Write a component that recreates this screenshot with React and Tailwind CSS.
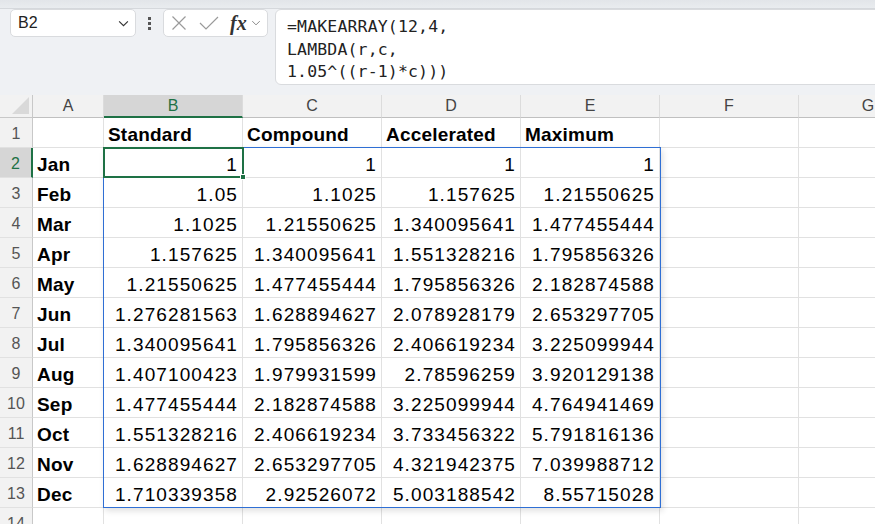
import React from "react";

const rows = [
  ["Jan", "1", "1", "1", "1"],
  ["Feb", "1.05", "1.1025", "1.157625", "1.21550625"],
  ["Mar", "1.1025", "1.21550625", "1.340095641", "1.477455444"],
  ["Apr", "1.157625", "1.340095641", "1.551328216", "1.795856326"],
  ["May", "1.21550625", "1.477455444", "1.795856326", "2.182874588"],
  ["Jun", "1.276281563", "1.628894627", "2.078928179", "2.653297705"],
  ["Jul", "1.340095641", "1.795856326", "2.406619234", "3.225099944"],
  ["Aug", "1.407100423", "1.979931599", "2.78596259", "3.920129138"],
  ["Sep", "1.477455444", "2.182874588", "3.225099944", "4.764941469"],
  ["Oct", "1.551328216", "2.406619234", "3.733456322", "5.791816136"],
  ["Nov", "1.628894627", "2.653297705", "4.321942375", "7.039988712"],
  ["Dec", "1.710339358", "2.92526072", "5.003188542", "8.55715028"],
];

const cols = [
  { l: "A", w: "w-[71px]" },
  { l: "B", w: "w-[139px]", sel: true },
  { l: "C", w: "w-[139px]" },
  { l: "D", w: "w-[139px]" },
  { l: "E", w: "w-[139px]" },
  { l: "F", w: "w-[139px]" },
  { l: "G", w: "w-[139px]" },
];

const font = { fontFamily: '"Liberation Sans", Arial, sans-serif' };

function Chevron({ className }) {
  return (
    <svg className={className} viewBox="0 0 12 8" fill="none" stroke="currentColor" strokeWidth="1.3">
      <path d="M1 1.5 L6 6.5 L11 1.5" />
    </svg>
  );
}

function Cell({ w, children, align = "right", bold = false }) {
  return (
    <div
      className={`${w} h-[30px] shrink-0 border-r border-b border-[#e1e1e1] flex items-center px-[4px] pt-[5px] overflow-hidden whitespace-nowrap text-[19px] text-black ${
        align === "right" ? "justify-end tracking-[1.1px]" : "justify-start tracking-[0.2px]"
      } ${bold ? "font-bold" : ""}`}
    >
      {children}
    </div>
  );
}

function RowHeader({ n, sel }) {
  return (
    <div
      className={`w-[33px] h-[30px] shrink-0 flex items-center justify-center pt-[2px] text-[16px] border-b border-[#e1e1e1] ${
        sel
          ? "bg-[#d6d6d6] text-[#1e7145] border-r-2 border-r-[#1e7145]"
          : "bg-[#f2f2f2] text-[#555] border-r border-r-[#c8c8c8]"
      }`}
    >
      {n}
    </div>
  );
}

export default function App() {
  return (
    <div className="w-[875px] h-[524px] overflow-hidden bg-white relative" style={font}>
      {/* Toolbar */}
      <div className="h-[95px] bg-[#eff1f4] flex flex-col">
        <div className="h-[9px] bg-gradient-to-b from-[#e2e5e9] to-[#e9ecef] border-b border-[#d5d8dc]" />
        <div className="flex items-start pl-[10px] pt-[0px]">
          <div className="w-[126px] h-[28px] rounded-[5px] border border-[#d9dbde] bg-white flex items-center justify-between pl-[7px] pr-[6px]">
            <span className="text-[16px] text-[#222]">B2</span>
            <Chevron className="w-[11px] h-[7px] text-[#333]" />
          </div>
          <div className="w-[27px] h-[28px] flex flex-col items-center justify-center gap-[2px]">
            <span className="w-[3px] h-[3px] bg-[#555]" />
            <span className="w-[3px] h-[3px] bg-[#555]" />
            <span className="w-[3px] h-[3px] bg-[#555]" />
          </div>
          <div className="w-[105px] h-[28px] rounded-[5px] border border-[#d9dbde] bg-white flex items-center pl-[7px]">
            <svg className="w-[16px] h-[16px] text-[#9a9a9a]" viewBox="0 0 16 16" fill="none" stroke="currentColor" strokeWidth="1.2">
              <path d="M1.5 1.5 L14.5 14.5 M14.5 1.5 L1.5 14.5" />
            </svg>
            <svg className="w-[20px] h-[16px] ml-[12px] text-[#9a9a9a]" viewBox="0 0 20 16" fill="none" stroke="currentColor" strokeWidth="1.2">
              <path d="M1 8 L7 14 L19 2" />
            </svg>
            <span
              className="ml-[11px] text-[20px] italic font-bold text-[#333] leading-none"
              style={{ fontFamily: '"Liberation Serif", "Times New Roman", serif' }}
            >
              fx
            </span>
            <Chevron className="ml-[4px] w-[10px] h-[6px] text-[#888]" />
          </div>
          <div className="ml-[7px] flex-1 mr-[-20px] h-[76px] rounded-[6px] border border-[#d9dbde] bg-white pl-[11px] pt-[6px]">
            <div
              className="text-[16.5px] leading-[22.5px] text-[#222] tracking-[0.15px]"
              style={{ fontFamily: '"DejaVu Sans Mono", "Liberation Mono", monospace' }}
            >
              <div>=MAKEARRAY(12,4,</div>
              <div>LAMBDA(r,c,</div>
              <div>1.05^((r-1)*c)))</div>
            </div>
          </div>
        </div>
      </div>

      {/* Grid */}
      <div className="relative">
        {/* Column headers */}
        <div className="flex h-[23px] bg-[#f2f2f2]">
          <div className="w-[33px] h-[23px] shrink-0 border-r border-b border-[#c8c8c8] flex items-end justify-end pr-[3px] pb-[3px]">
            <svg width="17" height="17" viewBox="0 0 17 17">
              <path d="M17 0 L17 17 L0 17 Z" fill="#d9d9d9" />
            </svg>
          </div>
          {cols.map((c) => (
            <div
              key={c.l}
              className={`${c.w} h-[23px] shrink-0 flex items-center justify-center text-[16px] border-r border-r-[#dcdcdc] ${
                c.sel
                  ? "bg-[#d6d6d6] text-[#1e7145] border-b-2 border-b-[#1e7145]"
                  : "text-[#444] border-b border-b-[#c0c0c0]"
              }`}
            >
              {c.l}
            </div>
          ))}
        </div>

        {/* Row 1 */}
        <div className="flex">
          <RowHeader n={1} />
          <Cell w="w-[71px]" />
          <Cell w="w-[139px]" align="left" bold>Standard</Cell>
          <Cell w="w-[139px]" align="left" bold>Compound</Cell>
          <Cell w="w-[139px]" align="left" bold>Accelerated</Cell>
          <Cell w="w-[139px]" align="left" bold>Maximum</Cell>
          <Cell w="w-[139px]" />
          <Cell w="w-[139px]" />
        </div>

        {rows.map((r, i) => (
          <div className="flex" key={r[0]}>
            <RowHeader n={i + 2} sel={i === 0} />
            <Cell w="w-[71px]" align="left" bold>{r[0]}</Cell>
            <Cell w="w-[139px]">{r[1]}</Cell>
            <Cell w="w-[139px]">{r[2]}</Cell>
            <Cell w="w-[139px]">{r[3]}</Cell>
            <Cell w="w-[139px]">{r[4]}</Cell>
            <Cell w="w-[139px]" />
            <Cell w="w-[139px]" />
          </div>
        ))}

        <div className="flex">
          <RowHeader n={14} />
          <Cell w="w-[71px]" />
          <Cell w="w-[139px]" />
          <Cell w="w-[139px]" />
          <Cell w="w-[139px]" />
          <Cell w="w-[139px]" />
          <Cell w="w-[139px]" />
          <Cell w="w-[139px]" />
        </div>

        {/* Spill range border */}
        <div className="absolute left-[103px] top-[52px] w-[558px] h-[361px] border border-[#2f6fd4] shadow-[2px_3px_6px_rgba(0,0,0,0.12)] pointer-events-none" />
        {/* Active cell */}
        <div className="absolute left-[103px] top-[52px] w-[141px] h-[31px] border-2 border-[#1e7145] pointer-events-none" />
        <div className="absolute left-[240px] top-[79px] w-[6px] h-[6px] bg-[#1e7145] border border-white pointer-events-none" />
      </div>
    </div>
  );
}
